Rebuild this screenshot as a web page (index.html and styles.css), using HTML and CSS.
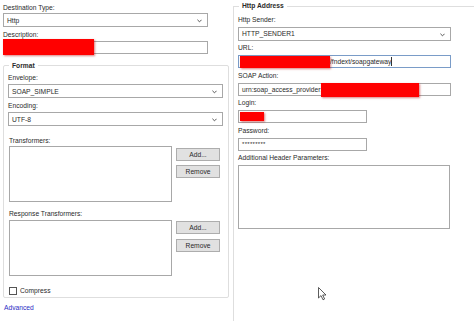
FILE: index.html
```html
<!DOCTYPE html>
<html lang="en">
<head>
    <meta charset="UTF-8">
    <title>Destination</title>
    <link rel="stylesheet" href="styles.css">
</head>
<body>

<div class="page">
    <div class="left">
        <div class="lbl first">Destination Type:</div>
        <div class="box select wide">Http<svg class="chev" viewBox="0 0 6 4"><polyline points="0.5,0.5 3,3 5.5,0.5"/></svg></div>
        <div class="lbl">Description:</div>
        <div class="box input wide"><span class="redact desc"></span></div>

        <div class="group format">
            <div class="legend">Format</div>
            <div class="lbl">Envelope:</div>
            <div class="box select full">SOAP_SIMPLE<svg class="chev" viewBox="0 0 6 4"><polyline points="0.5,0.5 3,3 5.5,0.5"/></svg></div>
            <div class="lbl">Encoding:</div>
            <div class="box select full">UTF-8<svg class="chev" viewBox="0 0 6 4"><polyline points="0.5,0.5 3,3 5.5,0.5"/></svg></div>

            <div class="lbl sub">Transformers:</div>
            <div class="listrow">
                <div class="list"></div>
                <div class="btns">
                    <div class="btn">Add...</div>
                    <div class="btn">Remove</div>
                </div>
            </div>

            <div class="lbl sub second">Response Transformers:</div>
            <div class="listrow second">
                <div class="list"></div>
                <div class="btns">
                    <div class="btn">Add...</div>
                    <div class="btn">Remove</div>
                </div>
            </div>

            <div class="check"><span class="cb"></span>Compress</div>
        </div>

        <div class="link">Advanced</div>
    </div>

    <div class="right">
        <div class="group http">
            <div class="legend">Http Address</div>
            <div class="lbl top">Http Sender:</div>
            <div class="box select rw">HTTP_SENDER1<svg class="chev" viewBox="0 0 6 4"><polyline points="0.5,0.5 3,3 5.5,0.5"/></svg></div>
            <div class="lbl">URL:</div>
            <div class="box input rw focus"><span class="redact url"></span>/fndext/soapgateway<span class="caret"></span></div>
            <div class="lbl">SOAP Action:</div>
            <div class="box input rw">urn:soap_access_provider:<span class="redact soap"></span></div>
            <div class="lbl">Login:</div>
            <div class="box input short"><span class="redact login"></span></div>
            <div class="lbl">Password:</div>
            <div class="box input short pw">*********</div>
            <div class="lbl">Additional Header Parameters:</div>
            <div class="box area"></div>
        </div>
    </div>

    <svg class="cursor" viewBox="0 0 9 14"><path d="M0.5,0.5 L0.5,11 L3,8.6 L5,12.8 L6.6,12 L4.7,8 L8,8 Z"/></svg>
</div>

</body>
</html>
```

FILE: styles.css
```css
body {
    margin: 0;
    background: #fff;
    font-family: "Liberation Sans", Arial, sans-serif;
    font-size: 6.7px;
    color: #2a2a2a;
}

.page {
    position: relative;
    display: flex;
    width: 474px;
    height: 321px;
    overflow: hidden;
}

.left {
    width: 230px;
    padding-left: 3px;
}

.right {
    flex: 1;
    padding-top: 6px;
}

.lbl {
    line-height: 9px;
    height: 9px;
    margin: 3px 0 2px;
    white-space: nowrap;
}

.lbl.first {
    margin-bottom: 1px;
}

.lbl.sub {
    margin-top: 10px;
    margin-left: 1px;
}

.lbl.sub.second {
    margin-top: 7px;
}

/* inputs and selects */
.box {
    position: relative;
    box-sizing: border-box;
    height: 13px;
    line-height: 11px;
    border: 1px solid #a8a8a8;
    padding-left: 3px;
    background: #fff;
    display: flex;
    align-items: center;
    white-space: nowrap;
}

.select {
    height: 14px;
}

.wide {
    width: 205px;
}

.full {
    width: 215px;
}

.rw {
    width: 213px;
}

.short {
    width: 129px;
}

.focus {
    border-color: #7a9cc8;
}

.area {
    width: 212px;
    height: 64px;
}

.pw {
    letter-spacing: 0.3px;
    font-size: 6px;
}

.chev {
    position: absolute;
    right: 5px;
    top: 5px;
    width: 5px;
    height: 4px;
    fill: none;
    stroke: #555;
    stroke-width: 1.2;
}

.caret {
    display: inline-block;
    width: 1px;
    height: 9px;
    background: #333;
}

.redact {
    display: inline-block;
    background: #ff0000;
    box-shadow: 1px 1px 2px rgba(180, 0, 0, 0.5);
}

.desc {
    width: 91px;
    height: 16px;
    margin-left: -4px;
    margin-top: -1px;
}

.url {
    width: 90px;
    height: 12px;
    margin-left: -2px;
}

.soap {
    width: 98px;
    height: 14px;
    margin-left: -1px;
    margin-top: 1px;
}

.login {
    width: 24px;
    height: 9px;
    margin-left: -2px;
}

/* group boxes */
.group {
    border: 1px solid #dedede;
    position: relative;
}

.legend {
    display: block;
    width: fit-content;
    font-weight: bold;
    line-height: 9px;
    height: 9px;
    margin-top: -5px;
    padding: 0 3px;
    background: #fff;
}

.format {
    margin-top: 11px;
    width: 226px;
    height: 233px;
    box-sizing: border-box;
    border-radius: 2px;
    padding-left: 4px;
}

.format .legend {
    margin-left: 1px;
}

.http {
    border-right: none;
    border-bottom: none;
    height: 330px;
    padding-left: 4px;
}

.http .legend {
    margin-left: 1px;
    margin-top: -6px;
}

.http .lbl {
    margin: 2.6px 0 3px;
}

.http .lbl.top {
    margin-top: 4.5px;
}

.listrow {
    display: flex;
    gap: 4px;
    margin-top: -1px;
    margin-left: 1px;
}

.listrow.second {
    margin-top: 0;
}

.list {
    width: 163px;
    height: 56px;
    box-sizing: border-box;
    border: 1px solid #a8a8a8;
}

.btns {
    display: flex;
    flex-direction: column;
    gap: 4px;
    padding-top: 2px;
}

.second .btns {
    padding-top: 1px;
    gap: 5px;
}

.btn {
    width: 44px;
    height: 13px;
    box-sizing: border-box;
    border: 1px solid #adadad;
    background: #e1e1e1;
    text-align: center;
    line-height: 11px;
}

.check {
    display: flex;
    align-items: center;
    gap: 3px;
    height: 9px;
    margin-top: 10px;
    margin-left: 1px;
}

.cb {
    width: 8px;
    height: 8px;
    box-sizing: border-box;
    border: 1px solid #555;
    background: #fff;
}

.link {
    color: #2c2cc4;
    margin-top: 5px;
    margin-left: 1px;
    line-height: 9px;
}

/* mouse pointer sitting over the page */
.cursor {
    position: absolute;
    left: 318px;
    top: 287px;
    width: 9px;
    height: 14px;
    fill: #fff;
    stroke: #333;
    stroke-width: 0.8;
}
```
